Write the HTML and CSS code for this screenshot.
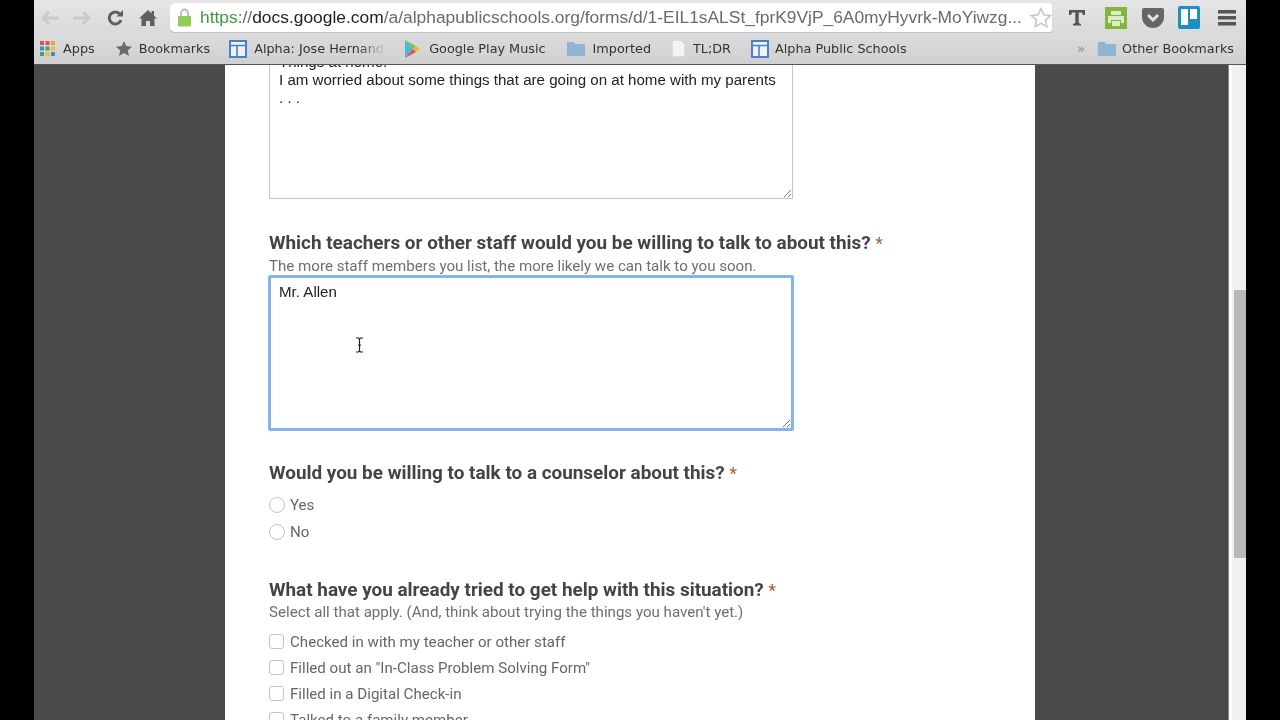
FILE: index.html
```html
<!DOCTYPE html>
<html lang="en">
<head>
<meta charset="utf-8">
<title>Google Form</title>
<link rel="stylesheet" href="styles.css">
</head>
<body>
<div class="window">
  <header class="toolbar">
    <div class="nav">
      <svg class="ic-back" width="20" height="16" viewBox="0 0 20 16"><path d="M9 2 3 8l6 6M3 8h16" fill="none" stroke="#cacaca" stroke-width="3"/></svg>
      <svg class="ic-fwd" width="20" height="16" viewBox="0 0 20 16"><path d="M11 2l6 6-6 6M17 8H1" fill="none" stroke="#cacaca" stroke-width="3"/></svg>
      <svg class="ic-reload" width="16" height="16" viewBox="0 0 16 16"><path d="M13 4.2A6 6 0 1 0 14 10" fill="none" stroke="#5f5f5f" stroke-width="3"/><path d="M9.500 6.500H16V0z" fill="#5f5f5f"/></svg>
      <svg class="ic-home" width="18" height="16" viewBox="0 0 18 16"><path d="M9 0 0 8.500h2.500V16h4.500v-5h4v5h4.500V8.500H18l-3-2.800V1h-2.500v2.400z" fill="#5f5f5f"/></svg>
    </div>
    <div class="omnibox">
      <svg class="ic-lock" width="13" height="19" viewBox="0 0 13 19"><path d="M3 8V5a3.500 3.500 0 0 1 7 0v3" fill="none" stroke="#b9b9b0" stroke-width="1.800"/><rect x="0" y="8" width="13" height="10.500" rx="1" fill="#94cc5a"/></svg>
      <div class="url"><span class="u-green">https</span>://<span class="u-dark">docs.google.com</span>/a/alphapublicschools.org/forms/d/1-EIL1sALSt_fprK9VjP_6A0myHyvrk-MoYiwzg...</div>
      <svg class="ic-star" width="22" height="21" viewBox="0 0 22 21"><path d="M11 1.500l2.800 6.300 6.700.7-5 4.600 1.400 6.600L11 16.300l-5.900 3.400 1.400-6.600-5-4.600 6.700-.7z" fill="#fff" stroke="#c4c4c4" stroke-width="1.500"/></svg>
    </div>
    <div class="exts">
      <svg class="ext-t" width="18" height="17" viewBox="0 0 18 17"><path d="M1 1h16v5h-2l-1-2.500h-3.300V14L13 15v1.500H5V15l2.300-1V3.500H4L3 6H1z" fill="#555"/></svg>
      <svg class="ext-print" width="22" height="22" viewBox="0 0 22 22"><rect width="22" height="22" fill="#83b440"/><path d="M6 4h10v4H6zM3 9h16v7h-3v-3H6v3H3zM7 14h8v5H7z" fill="#dcecc4"/></svg>
      <svg class="ext-pocket" width="22" height="20" viewBox="0 0 22 20"><path d="M2 0h18a2 2 0 0 1 2 2v7A11 11 0 0 1 0 9V2a2 2 0 0 1 2-2z" fill="#666"/><path d="M6 7l5 5 5-5" fill="none" stroke="#e4e4e4" stroke-width="3"/></svg>
      <svg class="ext-trello" width="22" height="23" viewBox="0 0 22 23"><rect width="22" height="23" rx="2" fill="#1d8fc4"/><rect x="3" y="3" width="7" height="16" fill="#fff"/><rect x="12" y="3" width="7" height="10" fill="#fff"/></svg>
      <svg class="ext-menu" width="18" height="16" viewBox="0 0 18 16"><path d="M0 0h18v3.500H0zM0 6h18v3.500H0zM0 12h18v3.500H0z" fill="#555"/></svg>
    </div>
  </header>
  <nav class="bookmarks">
    <div class="bm bm-apps">
      <svg width="15" height="15" viewBox="0 0 15 15"><rect width="4" height="4" fill="#d9534f"/><rect x="5.500" width="4" height="4" fill="#d9534f"/><rect x="11" width="4" height="4" fill="#e8a33c"/><rect y="5.500" width="4" height="4" fill="#3f8fce"/><rect x="5.500" y="5.500" width="4" height="4" fill="#4aa564"/><rect x="11" y="5.500" width="4" height="4" fill="#e8c23c"/><rect y="11" width="4" height="4" fill="#4aa564"/><rect x="5.500" y="11" width="4" height="4" fill="#e8c23c"/><rect x="11" y="11" width="4" height="4" fill="#3f8fce"/></svg>
      <span>Apps</span>
    </div>
    <div class="bm bm-star">
      <svg width="16" height="15" viewBox="0 0 16 15"><path d="M8 0l2.300 5.100 5.700.6-4.200 3.700 1.200 5.600L8 12.100 3 15l1.200-5.600L0 5.700l5.700-.6z" fill="#6b6b6b"/></svg>
      <span>Bookmarks</span>
    </div>
    <div class="bm bm-alpha">
      <svg width="18" height="18" viewBox="0 0 18 18"><rect x="1" y="1" width="16" height="16" fill="#eef3fa" stroke="#4a7fc9" stroke-width="2"/><path d="M1 5.500h16M8 5.500V17" stroke="#4a7fc9" stroke-width="1.600"/></svg>
      <span class="fade">Alpha: Jose Hernandez</span>
    </div>
    <div class="bm bm-play">
      <svg width="15" height="18" viewBox="0 0 15 18"><path d="M0 0v18l8-9z" fill="#4fb8d8"/><path d="M0 0l8 9 3-3z" fill="#7cc05a"/><path d="M0 18l8-9 3 3z" fill="#d9534f"/><path d="M11 6l4 3-4 3-3-3z" fill="#f2b632"/></svg>
      <span>Google Play Music</span>
    </div>
    <div class="bm bm-imported">
      <svg width="18" height="15" viewBox="0 0 18 15"><path d="M0 1h7l1 2h10v12H0z" fill="#8fb4d4"/></svg>
      <span>Imported</span>
    </div>
    <div class="bm bm-doc">
      <svg width="13" height="17" viewBox="0 0 13 17"><path d="M0 0h9l4 4v13H0z" fill="#f4f4f4" stroke="#c8c8c8"/></svg>
      <span>TL;DR</span>
    </div>
    <div class="bm bm-aps">
      <svg width="18" height="18" viewBox="0 0 18 18"><rect x="1" y="1" width="16" height="16" fill="#eef3fa" stroke="#4a7fc9" stroke-width="2"/><path d="M1 5.500h16M8 5.500V17" stroke="#4a7fc9" stroke-width="1.600"/></svg>
      <span>Alpha Public Schools</span>
    </div>
    <div class="bm-spacer"></div>
    <span class="chev">»</span>
    <div class="bm bm-other">
      <svg width="18" height="15" viewBox="0 0 18 15"><path d="M0 1h7l1 2h10v12H0z" fill="#8fb4d4"/></svg>
      <span>Other Bookmarks</span>
    </div>
  </nav>
  <div class="content">
    <main class="stage">
      <div class="card">
        <div class="box box-first">
          <div class="box-text">Things at home.<br>I am worried about some things that are going on at home with my parents<br>. . .</div>
          <svg class="grip" width="9" height="9" viewBox="0 0 9 9"><path d="M1 8l7-7M5 8l3-3" stroke="#777" fill="none"/></svg>
        </div>
        <h2 class="q q-which">Which teachers or other staff would you be willing to talk to about this? <span class="req">*</span></h2>
        <p class="help">The more staff members you list, the more likely we can talk to you soon.</p>
        <div class="box box-focus">
          <div class="box-text">Mr. Allen</div>
          <svg class="cursor" width="9" height="16" viewBox="0 0 9 16"><path d="M1 1h2.500l1 1 1-1H8M4.500 2v12M1 15h2.500l1-1 1 1H8M3 8h3" fill="none" stroke="#222" stroke-width="1.200"/></svg>
          <svg class="grip" width="9" height="9" viewBox="0 0 9 9"><path d="M1 8l7-7M5 8l3-3" stroke="#777" fill="none"/></svg>
        </div>
        <h2 class="q q-would">Would you be willing to talk to a counselor about this? <span class="req">*</span></h2>
        <ul class="opts opts-radio">
          <li><i class="radio"></i>Yes</li>
          <li><i class="radio"></i>No</li>
        </ul>
        <h2 class="q q-what">What have you already tried to get help with this situation? <span class="req">*</span></h2>
        <p class="help help-what">Select all that apply. (And, think about trying the things you haven't yet.)</p>
        <ul class="opts opts-check">
          <li><i class="check"></i>Checked in with my teacher or other staff</li>
          <li><i class="check"></i>Filled out an "In-Class Problem Solving Form"</li>
          <li><i class="check"></i>Filled in a Digital Check-in</li>
          <li><i class="check"></i>Talked to a family member</li>
        </ul>
      </div>
    </main>
    <aside class="scrollbar"><div class="thumb"></div></aside>
  </div>
</div>
</body>
</html>
```

FILE: styles.css
```css
* { box-sizing: border-box; }
html, body { margin: 0; height: 100%; }
body { background: #000; height: 720px; overflow: hidden; padding: 0 34px; }
.window { height: 720px; display: flex; flex-direction: column; background: #4a4a4a; filter: blur(.45px); }

.toolbar { height: 33px; flex: none; display: flex; align-items: center; background: linear-gradient(#e6e6e6, #dadada); padding-top: 2px; }
.nav { width: 136px; flex: none; display: flex; align-items: center; padding-left: 6px; }
.ic-fwd { margin-left: 12px; }
.ic-reload { margin-left: 15px; }
.ic-home { margin-left: 16px; }
.omnibox { width: 882px; height: 29px; flex: none; background: #fff; border-radius: 5px 3px 3px 5px; display: flex; align-items: center; padding-left: 8px; box-shadow: 0 1px 1px #bdbdbd; }
.url { width: 831px; margin-left: 9px; font: 17.400px "Liberation Sans", Arial, sans-serif; color: #6a6a6a; white-space: nowrap; overflow: hidden; }
.u-green { color: #3c9a3c; }
.u-dark { color: #222; }
.ic-star { flex: none; margin-left: 0; }
.exts { flex: 1; display: flex; align-items: center; padding-left: 16px; }
.exts svg { flex: none; }
.ext-print { margin-left: 19px; }
.ext-pocket { margin-left: 15px; }
.ext-trello { margin-left: 14px; }
.ext-menu { margin-left: 18px; }

.bookmarks { height: 32px; flex: none; display: flex; align-items: center; background: linear-gradient(#dcdcdc, #d0d0d0); border-bottom: 1px solid #555; padding-left: 6px; font: 12.800px "DejaVu Sans", sans-serif; color: #333; }
.bm { display: flex; align-items: center; flex: none; gap: 8px; white-space: nowrap; }
.bm-star { margin-left: 21px; gap: 7px; }
.bm-alpha { margin-left: 19px; gap: 7px; }
.fade { width: 131px; overflow: hidden; -webkit-mask-image: linear-gradient(90deg, #000 80%, transparent); mask-image: linear-gradient(90deg, #000 80%, transparent); }
.bm-play { margin-left: 20px; gap: 9px; }
.bm-imported { margin-left: 21px; }
.bm-doc { margin-left: 21px; }
.bm-aps { margin-left: 20px; gap: 6px; }
.bm-spacer { flex: 1; }
.chev { color: #888; margin-right: 13px; }
.bm-other { margin-right: 12px; gap: 6px; }

.content { flex: 1; min-height: 0; display: flex; }
.stage { flex: 1; min-width: 0; overflow: hidden; border-right: 1px solid #888; padding-left: 191px; }
.card { width: 810px; height: 100%; background: #fff; padding-left: 44px; overflow: hidden; font-family: Roboto, sans-serif; }
.scrollbar { width: 17px; flex: none; background: linear-gradient(90deg, #fff 0 3px, #f0f0f0 3px); padding: 225px 0 0 5px; }
.thumb { height: 268px; background: #b9b9b9; }

.box { position: relative; width: 524px; background: #fff; border: 1px solid #c8c8c8; overflow: hidden; font: 15.100px/18px "Liberation Sans", Arial, sans-serif; color: #222; }
.box-first { height: 155px; margin-top: -21px; }
.box-text { padding: 8px 9px 0; }
.box-focus { width: 526px; height: 156px; margin-left: -1px; border: 3px solid #82b5ec; border-radius: 2px; }
.box-focus .box-text { padding: 5px 8px 0; }
.grip { position: absolute; right: 0; bottom: 0; }
.cursor { position: absolute; left: 84px; top: 59px; }

.q { margin: 33px 0 0; font-size: 18.900px; line-height: 22px; font-weight: 700; color: #444; }
.req { color: #b0623a; font-size: 16px; }
.q-would { margin-top: 31px; }
.q-what { margin-top: 33px; }
.help { margin: 3px 0 0; font-size: 15.100px; line-height: 17px; color: #6f6f6f; }
.help-what { margin-top: 2px; }
.opts { list-style: none; margin: 0; padding: 0; font-size: 15.100px; color: #666; }
.opts li { display: flex; align-items: center; gap: 5px; white-space: nowrap; }
.opts-radio { margin-top: 6.500px; }
.opts-radio li { height: 27px; }
.opts-check { margin-top: 8px; }
.opts-check li { height: 26px; }
.radio { width: 16px; height: 16px; border: 1px solid #c4c4c4; border-radius: 50%; flex: none; }
.check { width: 15px; height: 15px; margin-right: 1px; border: 1px solid #c4c4c4; border-radius: 3px; flex: none; }
```
